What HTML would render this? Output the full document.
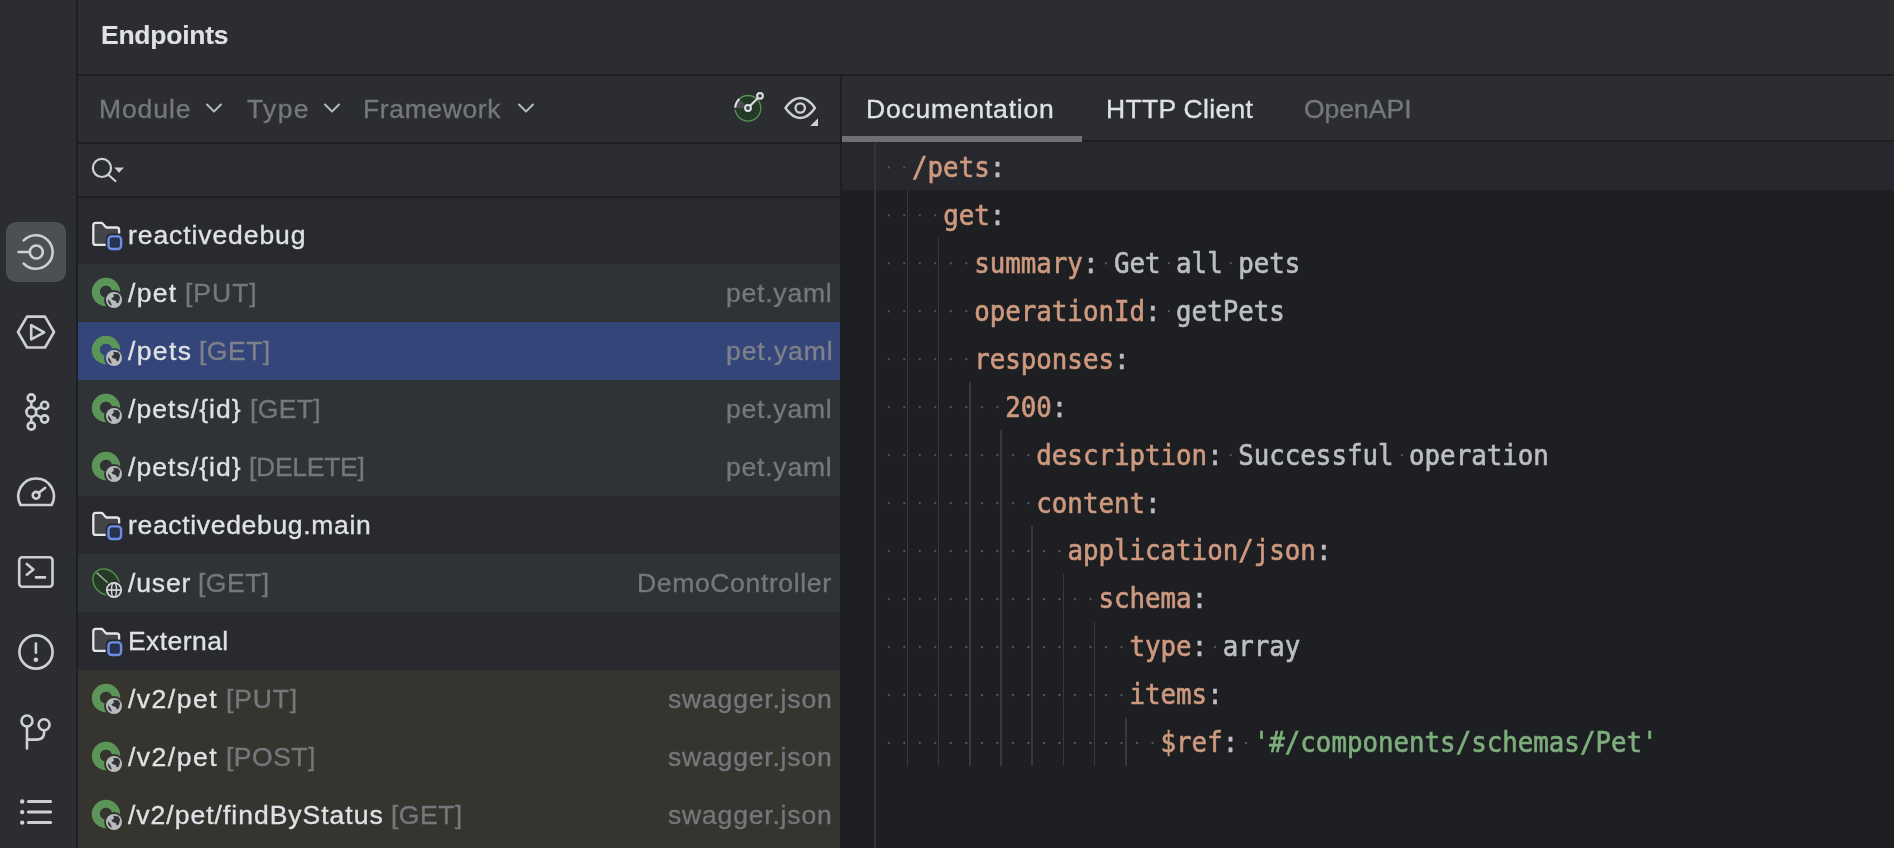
<!DOCTYPE html>
<html lang="en">
<head>
<meta charset="utf-8">
<title>Endpoints</title>
<style>
html,body{margin:0;padding:0;background:#1e1f22;}
body{width:1894px;height:848px;overflow:hidden;position:relative;font-family:"Liberation Sans",sans-serif;color:#dfe1e5;}
.abs{position:absolute;}
#strip{left:0;top:0;width:76px;height:848px;background:#2b2d30;}
#vline1{left:76px;top:0;width:2px;height:848px;background:#1e1f22;}
#header{left:78px;top:0;width:1816px;height:74px;background:#2b2d30;}
#hline1{left:78px;top:74px;width:1816px;height:2px;background:#1e1f22;}
#toolbar{left:78px;top:76px;width:762px;height:66px;background:#2b2d30;}
#hline2{left:78px;top:142px;width:762px;height:2px;background:#1e1f22;}
#search{left:78px;top:144px;width:762px;height:52px;background:#2b2d30;}
#hline3{left:78px;top:196px;width:762px;height:2px;background:#1e1f22;}
#list{left:78px;top:198px;width:762px;height:650px;background:#282a2f;}
.row{position:absolute;left:0;width:762px;height:58px;}
.row.ep{background:#303335;}
.row.ext{background:#36342f;}
.row.sel{background:#34457a;}
.x{position:absolute;white-space:pre;line-height:40px;font-size:26.5px;-webkit-text-stroke:0.35px currentColor;will-change:transform;}
#tabs{left:842px;top:76px;width:1052px;height:65px;background:#2b2d30;}
#vline2{left:840px;top:76px;width:2px;height:772px;background:#1e1f22;}
#tabul{left:842px;top:136px;width:240px;height:6px;background:#6e7075;}
#hline4{left:1082px;top:140px;width:812px;height:2px;background:#1e1f22;}
#editor{left:842px;top:142px;width:1052px;height:706px;background:#1e1f22;}
#caretrow{left:842px;top:142px;width:1052px;height:48px;background:#26282e;}
#gutline{left:874px;top:142px;width:2px;height:706px;background:#33353a;}
#code{left:880.7px;top:142.5px;-webkit-text-stroke:0.6px currentColor;font-family:"DejaVu Sans Mono","Liberation Mono",monospace;font-size:25.8px;line-height:44.037px;white-space:pre;color:#bcbec4;margin:0;letter-spacing:0px;transform:scaleY(1.09);transform-origin:0 0;will-change:transform;}
.k{color:#cd997f;}
.s{color:#7dae7c;}
.d{background-image:radial-gradient(circle at 50% 51%,#5e6168 0.6px,rgba(94,97,104,0) 1.25px);background-size:15.53px 100%;background-repeat:repeat-x;}
.guide{position:absolute;width:1.5px;background:#37393d;}
svg{position:absolute;overflow:visible;}
.ic{fill:none;stroke:#ced0d6;stroke-width:2.6;stroke-linecap:round;stroke-linejoin:round;}
</style>
</head>
<body>
<div id="strip" class="abs"></div>
<div id="vline1" class="abs"></div>
<div id="header" class="abs"></div>
<div id="hline1" class="abs"></div>
<div id="toolbar" class="abs"></div>
<div id="hline2" class="abs"></div>
<div id="search" class="abs"></div>
<div id="hline3" class="abs"></div>

<div id="list" class="abs">
  <div class="row ep" style="top:66px"></div>
  <div class="row sel" style="top:124px"></div>
  <div class="row ep" style="top:182px;height:116px"></div>
  <div class="row ep" style="top:356px"></div>
  <div class="row ext" style="top:472px;height:178px"></div>
</div>

<div id="vline2" class="abs"></div>
<div id="tabs" class="abs"></div>
<div id="hline4" class="abs"></div>
<div id="tabul" class="abs"></div>
<div id="editor" class="abs"></div>
<div id="caretrow" class="abs"></div>
<div id="gutline" class="abs"></div>
<div class="guide" style="left:906.6px;top:190px;height:576px"></div>
<div class="guide" style="left:937.8px;top:238px;height:528px"></div>
<div class="guide" style="left:969.0px;top:382px;height:384px"></div>
<div class="guide" style="left:1000.2px;top:430px;height:336px"></div>
<div class="guide" style="left:1031.4px;top:526px;height:240px"></div>
<div class="guide" style="left:1062.6px;top:574px;height:192px"></div>
<div class="guide" style="left:1093.8px;top:622px;height:144px"></div>
<div class="guide" style="left:1125.0px;top:718px;height:48px"></div>
<pre id="code" class="abs"><span class="d">  </span><span class="k">/pets</span>:
<span class="d">    </span><span class="k">get</span>:
<span class="d">      </span><span class="k">summary</span>:<span class="d"> </span>Get<span class="d"> </span>all<span class="d"> </span>pets
<span class="d">      </span><span class="k">operationId</span>:<span class="d"> </span>getPets
<span class="d">      </span><span class="k">responses</span>:
<span class="d">        </span><span class="k">200</span>:
<span class="d">          </span><span class="k">description</span>:<span class="d"> </span>Successful<span class="d"> </span>operation
<span class="d">          </span><span class="k">content</span>:
<span class="d">            </span><span class="k">application/json</span>:
<span class="d">              </span><span class="k">schema</span>:
<span class="d">                </span><span class="k">type</span>:<span class="d"> </span>array
<span class="d">                </span><span class="k">items</span>:
<span class="d">                  </span><span class="k">$ref</span>:<span class="d"> </span><span class="s">'#/components/schemas/Pet'</span></pre>
<span id="title" class="x" style="left:101.20px;top:14.82px;letter-spacing:-0.250px;color:#dfe1e5;font-weight:bold;-webkit-text-stroke:0.1px currentColor">Endpoints</span>
<span id="f1" class="x" style="left:98.80px;top:88.62px;letter-spacing:0.900px;color:#75777c;font-weight:normal">Module</span>
<span id="f2" class="x" style="left:247.00px;top:88.62px;letter-spacing:1.333px;color:#75777c;font-weight:normal">Type</span>
<span id="f3" class="x" style="left:363.00px;top:88.62px;letter-spacing:0.625px;color:#75777c;font-weight:normal">Framework</span>
<span id="r1" class="x" style="left:128.20px;top:214.52px;letter-spacing:0.917px;color:#dfe1e5;font-weight:normal">reactivedebug</span>
<span id="r2n" class="x" style="left:127.60px;top:272.52px;letter-spacing:1.333px;color:#dfe1e5;font-weight:normal">/pet</span>
<span id="r2m" class="x" style="left:185.00px;top:272.52px;letter-spacing:1.000px;color:#75777c;font-weight:normal">[PUT]</span>
<span id="r3n" class="x" style="left:127.60px;top:330.52px;letter-spacing:1.375px;color:#dfe1e5;font-weight:normal">/pets</span>
<span id="r3m" class="x" style="left:198.60px;top:330.52px;letter-spacing:0.500px;color:#7e8189;font-weight:normal">[GET]</span>
<span id="r4n" class="x" style="left:127.60px;top:388.52px;letter-spacing:1.056px;color:#dfe1e5;font-weight:normal">/pets/{id}</span>
<span id="r4m" class="x" style="left:249.80px;top:388.52px;letter-spacing:0.375px;color:#75777c;font-weight:normal">[GET]</span>
<span id="r5n" class="x" style="left:127.60px;top:446.52px;letter-spacing:1.056px;color:#dfe1e5;font-weight:normal">/pets/{id}</span>
<span id="r5m" class="x" style="left:248.60px;top:446.52px;letter-spacing:-0.286px;color:#75777c;font-weight:normal">[DELETE]</span>
<span id="r6" class="x" style="left:128.20px;top:504.52px;letter-spacing:0.676px;color:#dfe1e5;font-weight:normal">reactivedebug.main</span>
<span id="r7n" class="x" style="left:127.60px;top:562.52px;letter-spacing:0.875px;color:#dfe1e5;font-weight:normal">/user</span>
<span id="r7m" class="x" style="left:198.00px;top:562.52px;letter-spacing:0.500px;color:#75777c;font-weight:normal">[GET]</span>
<span id="r8" class="x" style="left:128.00px;top:620.52px;letter-spacing:0.429px;color:#dfe1e5;font-weight:normal">External</span>
<span id="r9n" class="x" style="left:128.00px;top:678.52px;letter-spacing:1.500px;color:#dfe1e5;font-weight:normal">/v2/pet</span>
<span id="r9m" class="x" style="left:225.60px;top:678.52px;letter-spacing:0.875px;color:#75777c;font-weight:normal">[PUT]</span>
<span id="r10n" class="x" style="left:128.00px;top:736.52px;letter-spacing:1.500px;color:#dfe1e5;font-weight:normal">/v2/pet</span>
<span id="r10m" class="x" style="left:225.60px;top:736.52px;letter-spacing:0.500px;color:#75777c;font-weight:normal">[POST]</span>
<span id="r11n" class="x" style="left:128.00px;top:794.52px;letter-spacing:1.000px;color:#dfe1e5;font-weight:normal">/v2/pet/findByStatus</span>
<span id="r11m" class="x" style="left:391.00px;top:794.52px;letter-spacing:0.500px;color:#75777c;font-weight:normal">[GET]</span>
<span id="p2" class="x" style="left:726.00px;top:272.52px;letter-spacing:0.786px;color:#75777c;font-weight:normal">pet.yaml</span>
<span id="p3" class="x" style="left:726.00px;top:330.52px;letter-spacing:0.929px;color:#7e8189;font-weight:normal">pet.yaml</span>
<span id="p4" class="x" style="left:726.00px;top:388.52px;letter-spacing:0.786px;color:#75777c;font-weight:normal">pet.yaml</span>
<span id="p5" class="x" style="left:726.00px;top:446.52px;letter-spacing:0.786px;color:#75777c;font-weight:normal">pet.yaml</span>
<span id="p7" class="x" style="left:637.00px;top:562.52px;letter-spacing:0.654px;color:#75777c;font-weight:normal">DemoController</span>
<span id="p9" class="x" style="left:667.60px;top:678.52px;letter-spacing:0.818px;color:#75777c;font-weight:normal">swagger.json</span>
<span id="p10" class="x" style="left:667.60px;top:736.52px;letter-spacing:0.818px;color:#75777c;font-weight:normal">swagger.json</span>
<span id="p11" class="x" style="left:667.60px;top:794.52px;letter-spacing:0.818px;color:#75777c;font-weight:normal">swagger.json</span>
<span id="t1" class="x" style="left:866.40px;top:88.52px;letter-spacing:0.792px;color:#dfe1e5;font-weight:normal">Documentation</span>
<span id="t2" class="x" style="left:1105.60px;top:88.52px;letter-spacing:0.300px;color:#dfe1e5;font-weight:normal">HTTP Client</span>
<span id="t3" class="x" style="left:1304.20px;top:88.52px;letter-spacing:0.000px;color:#75777c;font-weight:normal">OpenAPI</span>
<svg width="1894" height="848" viewBox="0 0 1894 848" style="left:0;top:0">
<rect x="6" y="222" width="60" height="60" rx="10" fill="#4c4f53"/>
<path class="ic" d="M23.75 240.47 A16.75 16.75 0 1 1 23.75 263.53"/>
<circle class="ic" cx="36.3" cy="252" r="6.5"/>
<path class="ic" d="M18.6 252 H29.6"/>
<path class="ic" d="M18 332 L27 316.6 H45 L54 332 L45 347.5 H27 Z"/>
<path class="ic" d="M31.2 325.2 V339.4 L44.2 332.3 Z"/>
<g class="ic" stroke-width="3"><circle cx="31.3" cy="398" r="3.6"/><circle cx="31.3" cy="412" r="4.9"/><circle cx="31.3" cy="426" r="3.6"/><circle cx="44.6" cy="405.4" r="3.6"/><circle cx="44.6" cy="419" r="3.6"/><path stroke-width="2.6" d="M31.3 402 V406.7 M31.3 417.3 V422 M35.9 409.6 L41.2 407.0 M35.9 414.6 L41.2 417.3"/></g>
<path class="ic" d="M20.6 505 A17.8 17.8 0 1 1 51.6 505 Z"/>
<circle class="ic" cx="36.1" cy="495.3" r="3.4"/><path class="ic" d="M38.6 493 L45.2 487.8"/>
<rect class="ic" x="19.2" y="557.2" width="33.3" height="29.5" rx="3.2"/>
<path class="ic" d="M26.8 564 L33.4 569.4 L26.8 574.8 M36 577.4 H45"/>
<circle class="ic" cx="36" cy="652" r="16.6"/>
<path class="ic" stroke-width="3.2" d="M35.9 643.6 V652.8"/><circle cx="35.9" cy="659.7" r="2.3" fill="#ced0d6"/>
<circle class="ic" cx="27" cy="721" r="5.5"/><circle class="ic" cx="44.1" cy="724.7" r="5.5"/>
<path class="ic" d="M27 726.5 V748.5 M44.1 730.2 V732.6 Q44.1 739.6 37 739.6 H27"/>
<circle cx="22.2" cy="801.5" r="2.2" fill="#ced0d6"/><path d="M28.4 801.5 H50.6" stroke="#ced0d6" stroke-width="3" stroke-linecap="round"/>
<circle cx="22.2" cy="812.1" r="2.2" fill="#ced0d6"/><path d="M28.4 812.1 H50.6" stroke="#ced0d6" stroke-width="3" stroke-linecap="round"/>
<circle cx="22.2" cy="822.6" r="2.2" fill="#ced0d6"/><path d="M28.4 822.6 H50.6" stroke="#ced0d6" stroke-width="3" stroke-linecap="round"/>
<path d="M207 104.5 L214 111.5 L221 104.5" fill="none" stroke="#b4b8bf" stroke-width="2" stroke-linecap="round" stroke-linejoin="round"/>
<path d="M325 104.5 L332 111.5 L339 104.5" fill="none" stroke="#b4b8bf" stroke-width="2" stroke-linecap="round" stroke-linejoin="round"/>
<path d="M519 104.5 L526 111.5 L533 104.5" fill="none" stroke="#b4b8bf" stroke-width="2" stroke-linecap="round" stroke-linejoin="round"/>
<circle cx="101.95" cy="167.95" r="9.05" fill="none" stroke="#ced0d6" stroke-width="2.2"/><path d="M108.6 175 L115.4 181" stroke="#ced0d6" stroke-width="2.2" stroke-linecap="round"/><path d="M114.2 167.6 H123.9 L119.05 172.8 Z" fill="#ced0d6"/>
<circle cx="748" cy="108.3" r="12.8" fill="#253a26" stroke="#558f52" stroke-width="1.4"/>
<path d="M735.2 108.3 A12.8 12.8 0 0 1 739.5 98.7 L748 108.3 Z" fill="#4a4c51"/>
<path d="M735.2 107.6 A12.8 12.8 0 0 1 739.3 98.9" fill="none" stroke="#dfe1e5" stroke-width="2"/>
<path d="M733.8 108.9 H737.2" stroke="#2b2d30" stroke-width="1.6"/>
<path d="M750.2 105.7 L757.8 98.1" stroke="#dfe1e5" stroke-width="2"/>
<circle cx="748" cy="108" r="2.9" fill="#3c3f44" stroke="#dfe1e5" stroke-width="2"/>
<circle cx="760" cy="95.8" r="2.9" fill="#3c3f44" stroke="#dfe1e5" stroke-width="2"/>
<path d="M785.4 108 Q792.5 98 800.2 98 Q808 98 815 108 Q808 118 800.2 118 Q792.5 118 785.4 108 Z" fill="none" stroke="#ced0d6" stroke-width="2.3" stroke-linejoin="round"/>
<circle cx="800.2" cy="108" r="4.7" fill="none" stroke="#ced0d6" stroke-width="2.3"/>
<path d="M810.2 126 H818 V118.2 Z" fill="#ced0d6"/>
<g>
<path d="M93.3 225.4 a2.5 2.5 0 0 1 2.5 -2.5 h6.3 l4.1 4.6 h10.4 a2.5 2.5 0 0 1 2.5 2.5 v12.4 a2.5 2.5 0 0 1 -2.5 2.5 h-20.8 a2.5 2.5 0 0 1 -2.5 -2.5 Z" fill="#434548" stroke="#e4e5e8" stroke-width="2.3" stroke-linejoin="round"/>
<rect x="105.7" y="233.6" width="18.2" height="18.2" rx="5" fill="#282a2f"/>
<rect x="108.5" y="236.4" width="12.6" height="12.6" rx="3.3" fill="#28324a" stroke="#6c8ee6" stroke-width="2.4"/>
</g>
<g>
<path d="M93.3 515.4 a2.5 2.5 0 0 1 2.5 -2.5 h6.3 l4.1 4.6 h10.4 a2.5 2.5 0 0 1 2.5 2.5 v12.4 a2.5 2.5 0 0 1 -2.5 2.5 h-20.8 a2.5 2.5 0 0 1 -2.5 -2.5 Z" fill="#434548" stroke="#e4e5e8" stroke-width="2.3" stroke-linejoin="round"/>
<rect x="105.7" y="523.6" width="18.2" height="18.2" rx="5" fill="#282a2f"/>
<rect x="108.5" y="526.4" width="12.6" height="12.6" rx="3.3" fill="#28324a" stroke="#6c8ee6" stroke-width="2.4"/>
</g>
<g>
<path d="M93.3 631.4 a2.5 2.5 0 0 1 2.5 -2.5 h6.3 l4.1 4.6 h10.4 a2.5 2.5 0 0 1 2.5 2.5 v12.4 a2.5 2.5 0 0 1 -2.5 2.5 h-20.8 a2.5 2.5 0 0 1 -2.5 -2.5 Z" fill="#434548" stroke="#e4e5e8" stroke-width="2.3" stroke-linejoin="round"/>
<rect x="105.7" y="639.6" width="18.2" height="18.2" rx="5" fill="#282a2f"/>
<rect x="108.5" y="642.4" width="12.6" height="12.6" rx="3.3" fill="#28324a" stroke="#6c8ee6" stroke-width="2.4"/>
</g>
<g>
<path fill-rule="evenodd" fill="#5b9558" d="M91.8 292 a14.2 14.2 0 1 0 28.4 0 a14.2 14.2 0 1 0 -28.4 0 Z M100.1 291.7 a5.9 5.9 0 1 1 11.8 0 a5.9 5.9 0 1 1 -11.8 0 Z"/>
<circle cx="114" cy="300" r="10" fill="#303335"/>
<rect x="108" y="296" width="14" height="12" fill="#303335"/>
<circle cx="106" cy="291.7" r="5.9" fill="#303335"/>
<circle cx="114" cy="300" r="8" fill="#b9bbbf"/>
<path fill="#303236" d="M113.5 293.7 l5 0.8 l1.6 3 l-1.2 4.8 l-2.2 1.2 l-0.8 -2.6 l-3 -0.6 l-1.6 -2 l2.4 -1.4 Z M108 299 l2.2 2.6 l1.8 4 l-2 -0.6 l-1.8 -2.8 Z"/>
</g>
<g>
<path fill-rule="evenodd" fill="#5b9558" d="M91.8 350 a14.2 14.2 0 1 0 28.4 0 a14.2 14.2 0 1 0 -28.4 0 Z M100.1 349.7 a5.9 5.9 0 1 1 11.8 0 a5.9 5.9 0 1 1 -11.8 0 Z"/>
<circle cx="114" cy="358" r="10" fill="#34457a"/>
<rect x="108" y="354" width="14" height="12" fill="#34457a"/>
<circle cx="106" cy="349.7" r="5.9" fill="#34457a"/>
<circle cx="114" cy="358" r="8" fill="#b9bbbf"/>
<path fill="#303236" d="M113.5 351.7 l5 0.8 l1.6 3 l-1.2 4.8 l-2.2 1.2 l-0.8 -2.6 l-3 -0.6 l-1.6 -2 l2.4 -1.4 Z M108 357 l2.2 2.6 l1.8 4 l-2 -0.6 l-1.8 -2.8 Z"/>
</g>
<g>
<path fill-rule="evenodd" fill="#5b9558" d="M91.8 408 a14.2 14.2 0 1 0 28.4 0 a14.2 14.2 0 1 0 -28.4 0 Z M100.1 407.7 a5.9 5.9 0 1 1 11.8 0 a5.9 5.9 0 1 1 -11.8 0 Z"/>
<circle cx="114" cy="416" r="10" fill="#303335"/>
<rect x="108" y="412" width="14" height="12" fill="#303335"/>
<circle cx="106" cy="407.7" r="5.9" fill="#303335"/>
<circle cx="114" cy="416" r="8" fill="#b9bbbf"/>
<path fill="#303236" d="M113.5 409.7 l5 0.8 l1.6 3 l-1.2 4.8 l-2.2 1.2 l-0.8 -2.6 l-3 -0.6 l-1.6 -2 l2.4 -1.4 Z M108 415 l2.2 2.6 l1.8 4 l-2 -0.6 l-1.8 -2.8 Z"/>
</g>
<g>
<path fill-rule="evenodd" fill="#5b9558" d="M91.8 466 a14.2 14.2 0 1 0 28.4 0 a14.2 14.2 0 1 0 -28.4 0 Z M100.1 465.7 a5.9 5.9 0 1 1 11.8 0 a5.9 5.9 0 1 1 -11.8 0 Z"/>
<circle cx="114" cy="474" r="10" fill="#303335"/>
<rect x="108" y="470" width="14" height="12" fill="#303335"/>
<circle cx="106" cy="465.7" r="5.9" fill="#303335"/>
<circle cx="114" cy="474" r="8" fill="#b9bbbf"/>
<path fill="#303236" d="M113.5 467.7 l5 0.8 l1.6 3 l-1.2 4.8 l-2.2 1.2 l-0.8 -2.6 l-3 -0.6 l-1.6 -2 l2.4 -1.4 Z M108 473 l2.2 2.6 l1.8 4 l-2 -0.6 l-1.8 -2.8 Z"/>
</g>
<g>
<ellipse cx="106" cy="582" rx="14.4" ry="11.7" transform="rotate(45 106 582)" fill="#253a26" stroke="#548f50" stroke-width="1.4"/>
<path d="M96.6 572.6 L108 583" stroke="#8fb08b" stroke-width="1.5" fill="none"/>
<circle cx="114" cy="590" r="9.6" fill="#303335"/>
<circle cx="114" cy="590" r="7.15" fill="#2c2e32" stroke="#d4d6da" stroke-width="1.8"/>
<ellipse cx="114" cy="590" rx="2.5" ry="7" fill="none" stroke="#d4d6da" stroke-width="1.5"/>
<path d="M107 590 H121" stroke="#d4d6da" stroke-width="1.7" fill="none"/>
</g>
<g>
<path fill-rule="evenodd" fill="#5b9558" d="M91.8 698 a14.2 14.2 0 1 0 28.4 0 a14.2 14.2 0 1 0 -28.4 0 Z M100.1 697.7 a5.9 5.9 0 1 1 11.8 0 a5.9 5.9 0 1 1 -11.8 0 Z"/>
<circle cx="114" cy="706" r="10" fill="#36342f"/>
<rect x="108" y="702" width="14" height="12" fill="#36342f"/>
<circle cx="106" cy="697.7" r="5.9" fill="#36342f"/>
<circle cx="114" cy="706" r="8" fill="#b9bbbf"/>
<path fill="#303236" d="M113.5 699.7 l5 0.8 l1.6 3 l-1.2 4.8 l-2.2 1.2 l-0.8 -2.6 l-3 -0.6 l-1.6 -2 l2.4 -1.4 Z M108 705 l2.2 2.6 l1.8 4 l-2 -0.6 l-1.8 -2.8 Z"/>
</g>
<g>
<path fill-rule="evenodd" fill="#5b9558" d="M91.8 756 a14.2 14.2 0 1 0 28.4 0 a14.2 14.2 0 1 0 -28.4 0 Z M100.1 755.7 a5.9 5.9 0 1 1 11.8 0 a5.9 5.9 0 1 1 -11.8 0 Z"/>
<circle cx="114" cy="764" r="10" fill="#36342f"/>
<rect x="108" y="760" width="14" height="12" fill="#36342f"/>
<circle cx="106" cy="755.7" r="5.9" fill="#36342f"/>
<circle cx="114" cy="764" r="8" fill="#b9bbbf"/>
<path fill="#303236" d="M113.5 757.7 l5 0.8 l1.6 3 l-1.2 4.8 l-2.2 1.2 l-0.8 -2.6 l-3 -0.6 l-1.6 -2 l2.4 -1.4 Z M108 763 l2.2 2.6 l1.8 4 l-2 -0.6 l-1.8 -2.8 Z"/>
</g>
<g>
<path fill-rule="evenodd" fill="#5b9558" d="M91.8 814 a14.2 14.2 0 1 0 28.4 0 a14.2 14.2 0 1 0 -28.4 0 Z M100.1 813.7 a5.9 5.9 0 1 1 11.8 0 a5.9 5.9 0 1 1 -11.8 0 Z"/>
<circle cx="114" cy="822" r="10" fill="#36342f"/>
<rect x="108" y="818" width="14" height="12" fill="#36342f"/>
<circle cx="106" cy="813.7" r="5.9" fill="#36342f"/>
<circle cx="114" cy="822" r="8" fill="#b9bbbf"/>
<path fill="#303236" d="M113.5 815.7 l5 0.8 l1.6 3 l-1.2 4.8 l-2.2 1.2 l-0.8 -2.6 l-3 -0.6 l-1.6 -2 l2.4 -1.4 Z M108 821 l2.2 2.6 l1.8 4 l-2 -0.6 l-1.8 -2.8 Z"/>
</g>
</svg>
</body>
</html>
